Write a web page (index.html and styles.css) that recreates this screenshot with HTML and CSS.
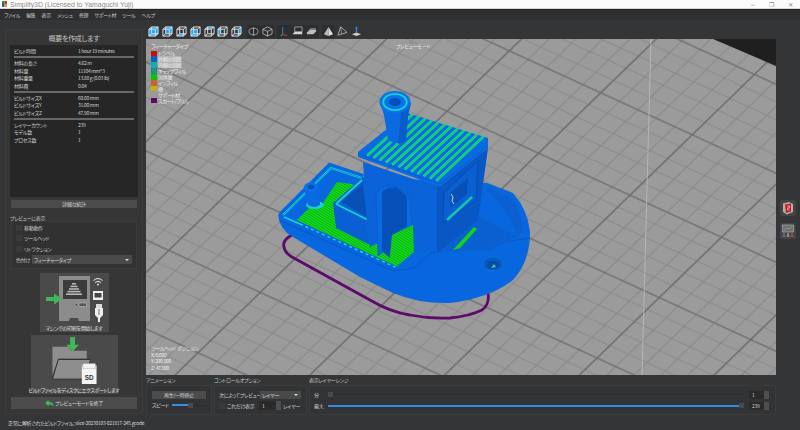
FILE: index.html
```html
<!DOCTYPE html>
<html lang="ja">
<head>
<meta charset="utf-8">
<title>Simplify3D</title>
<link rel="stylesheet" href="styles.css">
</head>
<body>
<svg class="defs" width="0" height="0" aria-hidden="true">
  <defs>
    <symbol id="wire" viewBox="0 0 12 12">
      <path d="M1 3.5H8V11H1ZM1 3.5L4 1H11V8.5L8 11M8 3.5L11 1M4 1V8.5H11M4 8.5L1 11" fill="none" stroke="#e8e8e8" stroke-width="1"/>
    </symbol>
    <pattern id="grid" width="5" height="5" patternUnits="userSpaceOnUse" patternTransform="matrix(18.3 8.4 12.45 -12.08 231 190)">
      <rect width="5" height="5" fill="#9b9b9b"/>
      <rect y="1" width="5" height=".05" fill="#868686"/>
      <rect y="2" width="5" height=".05" fill="#868686"/>
      <rect y="3" width="5" height=".05" fill="#868686"/>
      <rect y="4" width="5" height=".05" fill="#868686"/>
      <rect x="1" width=".05" height="5" fill="#868686"/>
      <rect x="2" width=".05" height="5" fill="#868686"/>
      <rect x="3" width=".05" height="5" fill="#868686"/>
      <rect x="4" width=".05" height="5" fill="#868686"/>
      <rect x="-.04" width=".08" height="5" fill="#6c6c6c"/>
      <rect y="-.04" width="5" height=".08" fill="#6c6c6c"/>
      <rect x="4.96" width=".08" height="5" fill="#6c6c6c"/>
      <rect y="4.96" width="5" height=".08" fill="#6c6c6c"/>
    </pattern>
    <pattern id="hatch" width="2.2" height="2.2" patternUnits="userSpaceOnUse" patternTransform="rotate(32)">
      <rect width="2.2" height="2.2" fill="#11dd0c"/>
      <rect width="2.2" height=".6" fill="#0b9a3a"/>
    </pattern>
    <pattern id="bowhatch" width="2" height="2" patternUnits="userSpaceOnUse" patternTransform="rotate(25)">
      <rect width="2" height="2" fill="#0a66dc"/>
      <rect width="2" height=".5" fill="#0a4fb0"/>
    </pattern>
  </defs>
</svg>

<header class="titlebar">
  <svg class="app-icon" viewBox="0 0 6 7"><rect width="3" height="3.5" fill="#1c8c3c"/><rect x="3" width="3" height="3.5" fill="#d03020"/><rect y="3.5" width="3" height="3.5" fill="#2050c0"/><rect x="3" y="3.5" width="3" height="3.5" fill="#d0a020"/></svg>
  <span class="app-name">Simplify3D (Licensed to Yamaguchi Yuji)</span>
  <div class="win-ctrls"><span>−</span><span>❐</span><span>✕</span></div>
</header>

<nav class="menubar">
  <span>ファイル</span><span>編集</span><span>表示</span><span>メッシュ</span><span>修理</span><span>サポート材</span><span>ツール</span><span>ヘルプ</span>
</nav>

<div class="workspace">
  <aside class="left">
    <section class="panel">
      <h1 class="panel-title">概要を作成します</h1>
      <div class="summary">
        <div class="row"><span>ビルド時間</span><span>1 hour 19 minutes</span></div>
        <hr class="sep">
        <div class="row"><span>材料の長さ</span><span>4.62 m</span></div>
        <div class="row"><span>材料量</span><span>11104 mm^3</span></div>
        <div class="row"><span>材料重量</span><span>13.88 g (0.03 lb)</span></div>
        <div class="row"><span>材料費</span><span>0.04</span></div>
        <hr class="sep">
        <div class="row"><span>ビルドサイズX</span><span>60.00 mm</span></div>
        <div class="row"><span>ビルドサイズY</span><span>31.00 mm</span></div>
        <div class="row"><span>ビルドサイズZ</span><span>47.90 mm</span></div>
        <hr class="sep">
        <div class="row"><span>レイヤーカウント</span><span>239</span></div>
        <div class="row"><span>モデル数</span><span>1</span></div>
        <div class="row"><span>プロセス数</span><span>1</span></div>
      </div>
      <button class="btn stats-btn">詳細な統計</button>
      <div class="group-label">プレビューに表示</div>
      <div class="show-box">
        <label class="check-row"><i class="check"></i>移動動作</label>
        <label class="check-row"><i class="check"></i>ツールヘッド</label>
        <label class="check-row"><i class="check"></i>リトラクション</label>
        <div class="color-row"><span>色付け</span><div class="select wide">フィーチャータイプ<i class="caret"></i></div></div>
      </div>
      <button class="big-btn machine">
        <svg class="big-icon" viewBox="40 274 69 50">
          <path d="M59 277H90V322H79L78 319H70L69 322H59Z" fill="#8c8c8c"/>
          <rect x="63" y="281" width="24" height="19" fill="#3c3c3c"/>
          <g fill="#b5b5b5"><rect x="72" y="284" width="4" height="1.6"/><rect x="70.5" y="286.6" width="7" height="1.6"/><rect x="69" y="289.2" width="10" height="1.6"/><rect x="67.5" y="291.8" width="13" height="1.6"/><rect x="66" y="294.4" width="16" height="1.6"/></g>
          <rect x="79" y="304" width="7.5" height="3.5" rx="1" fill="#555" stroke="#ccc" stroke-width=".5"/>
          <circle cx="76.5" cy="305.7" r=".8" fill="#333"/>
          <path d="M46 298H54V294.5L62 300L54 305.5V302H46Z" fill="#3fb75a"/>
          <g fill="none" stroke="#eee" stroke-width="1"><path d="M93.5 281.5Q98 277.5 102.5 281.5"/><path d="M95 283.5Q98 281 101 283.5"/></g>
          <circle cx="98" cy="285.5" r=".9" fill="#eee"/>
          <rect x="93" y="292" width="10" height="9" fill="#eee"/>
          <rect x="94.5" y="294" width="7" height="4.5" fill="#444"/>
          <rect x="96" y="305" width="6" height="4" fill="#ddd"/>
          <path d="M95 309H103V316L100 319V323H98V319L95 316Z" fill="#eee"/>
          <path d="M99 310V316" stroke="#555" stroke-width=".8"/>
        </svg>
        <span class="big-label">マシンでの印刷を開始します</span>
      </button>
      <button class="big-btn export">
        <svg class="big-icon" viewBox="31 336 87 51">
          <path d="M52 348H68L71 352H87V360H58L52 377Z" fill="#8e8e8e"/>
          <path d="M52 381L58 361H91L84 381Z" fill="#8e8e8e" stroke="#333" stroke-width="1"/>
          <path d="M70 338H75V346H79L72.5 353L66 346H70Z" fill="#3fb75a"/>
          <path d="M82 367H97V386H82Z" fill="#f4f4f4"/>
          <path d="M83 365H96V370H83Z" fill="#f4f4f4" stroke="#333" stroke-width=".4" stroke-dasharray="1 1"/>
          <text x="89.5" y="382" class="sd">SD</text>
        </svg>
        <span class="big-label">ビルドファイルをディスクにエクスポートします</span>
      </button>
      <button class="btn exit-btn">
        <svg class="exit-icon" viewBox="0 0 10 8"><path d="M0 3.5L4 0V2Q9 2 10 7.5Q8 5 4 5V7Z" fill="#3fb75a"/></svg>プレビューモードを終了
      </button>
    </section>
  </aside>

  <main class="main">
    <div class="toolbar">
      <div class="tool-set">
        <span class="tool"><svg viewBox="0 0 12 12"><path d="M1 3.5L4 1H11V8.5L8 11H1Z" fill="#19a4f5"/><use href="#wire"/></svg></span>
        <span class="tool"><svg viewBox="0 0 12 12"><path d="M4 1H11V8.5H4Z" fill="#19a4f5"/><use href="#wire"/></svg></span>
        <span class="tool"><svg viewBox="0 0 12 12"><path d="M4 8.5H11L8 11H1Z" fill="#19a4f5"/><use href="#wire"/></svg></span>
        <span class="tool"><svg viewBox="0 0 12 12"><path d="M1 3.5H8V11H1Z" fill="#19a4f5"/><use href="#wire"/></svg></span>
        <span class="tool"><svg viewBox="0 0 12 12"><path d="M1 3.5L4 1H11L8 3.5Z" fill="#19a4f5"/><use href="#wire"/></svg></span>
        <span class="tool"><svg viewBox="0 0 12 12"><path d="M1 3.5L4 1V8.5L1 11Z" fill="#19a4f5"/><use href="#wire"/></svg></span>
        <span class="tool"><svg viewBox="0 0 12 12"><path d="M8 3.5L11 1V8.5L8 11Z" fill="#19a4f5"/><use href="#wire"/></svg></span>
      </div>
      <div class="tool-set">
        <span class="tool dark"><svg viewBox="0 0 12 12"><ellipse cx="6" cy="6" rx="5" ry="3.6" fill="none" stroke="#bbb" stroke-width=".8"/><path d="M6 1.5V10.5" stroke="#bbb" stroke-width=".8"/></svg></span>
        <span class="tool dark"><svg viewBox="0 0 12 12"><path d="M6 1L11 3.5V8.5L6 11L1 8.5V3.5ZM1 3.5L6 6L11 3.5M6 6V11" fill="none" stroke="#ccc" stroke-width=".8"/></svg></span>
      </div>
      <div class="tool-set">
        <span class="tool dark"><svg viewBox="0 0 12 12"><path d="M4 1V9" stroke="#2f7be0" stroke-width="1.1"/><path d="M4 9L9 11" stroke="#d03030" stroke-width="1.1"/><path d="M4 9L2 11" stroke="#30b050" stroke-width="1.1"/></svg></span>
        <span class="tool dark"><svg viewBox="0 0 12 12"><path d="M3 1H11V7H3Z" fill="none" stroke="#ccc" stroke-width=".7"/><path d="M0.5 9L3.5 6H10.5L11.5 9Z" fill="#d8d8d8"/></svg></span>
        <span class="tool dark"><svg viewBox="0 0 12 12"><path d="M1 7L4 4H11V6L8 9H1Z" fill="#bdbdbd"/><path d="M3 4L5 2.5H10.5L11 4Z" fill="#8c8c8c"/></svg></span>
      </div>
      <div class="tool-set">
        <span class="tool dark"><svg viewBox="0 0 12 12"><path d="M6 1L1 9L6 11Z" fill="#bbb"/><path d="M6 1L11 9L6 11Z" fill="#ddd"/></svg></span>
        <span class="tool"><svg viewBox="0 0 12 12"><path d="M4 1L1 10L11 7Z" fill="none" stroke="#ccc" stroke-width=".8"/><path d="M4 1L5 8.5" stroke="#ccc" stroke-width=".6"/></svg></span>
        <span class="tool"><svg viewBox="0 0 12 12"><path d="M6 1V7" stroke="#2f8fe8" stroke-width="1.4"/><path d="M4.5 2.5L6 .5L7.5 2.5Z" fill="#2f8fe8"/><path d="M1 9L6 7L11 9L6 11Z" fill="#cfcfcf"/></svg></span>
      </div>
    </div>

    <div class="view-row">
      <div class="viewport">
        <svg class="scene" viewBox="146 39 630 336">
          <rect x="146" y="39" width="630" height="336" fill="url(#grid)"/>
          <path d="M651 39L642 375" stroke="#bdbdbd" stroke-width=".8" fill="none"/>
          <path d="M713 39H776V66Z" fill="#1f1f1f"/>

          <!-- skirt -->
          <path d="M292 235Q282 240 284 247Q285 253 292 257L370 300Q390 312 410 315Q430 319 450 318Q470 316 482 310Q490 304 488 293" fill="none" stroke="#5c0a6c" stroke-width="2.8"/>

          <!-- hull -->
          <path d="M278 215L330 165L363 177L487 183L513 193Q528 210 530 232Q530 262 513 280Q490 298 450 303Q420 304 393 293L360 277L293 237Q280 230 278 215Z" fill="#0867de"/>
          <path d="M279 220L393 271L413 268L431 253L530 238" fill="none" stroke="#0a57c4" stroke-width="1"/>
          <!-- bow interior -->
          <path d="M486 186L511 197Q522 212 524 230L517 236Q512 214 486 190Z" fill="url(#bowhatch)"/>
          <path d="M477 215L517 237L490 250L436 252Z" fill="url(#bowhatch)"/>
          <path d="M474 227L453 250L460 248L477 229Z" fill="#12d612"/>
          <!-- deck -->
          <path d="M297 220L310 207L323 203L337 182L352 184L370 190L370 247L413 225L414 252L396 267L383 262L333 237Z" fill="url(#hatch)"/>
          <!-- stern rim -->
          <path d="M281 215L330 166L363 177" fill="none" stroke="#0867de" stroke-width="6"/>
          <path d="M283 215L331 168L362 178" fill="none" stroke="#1ad2cc" stroke-width="2"/>
          <path d="M283 215L331 168L362 178" fill="none" stroke="#0a72dc" stroke-width=".7"/>
          <path d="M284 217L297 223L327 236L395 267" fill="none" stroke="#0867de" stroke-width="3"/>
          <path d="M284 217L300 224" fill="none" stroke="#1ad2cc" stroke-width="1.6"/>
          <path d="M300 224L395 267" fill="none" stroke="#1ad2cc" stroke-width="1.5" stroke-dasharray="3 3"/>
          <!-- box -->
          <path d="M333 203L362 178L372 183L372 246L336 228Z" fill="#0a60d2"/>
          <path d="M342 202L362 184L368 218Z" fill="#084fb6"/>
          <path d="M336 204L362 180M336 204L368 220" fill="none" stroke="#1ad2cc" stroke-width="1.8"/>
          <!-- small post -->
          <ellipse cx="315" cy="205" rx="9" ry="4" fill="#1ad2cc"/>
          <path d="M304 188L308 205Q314 209 320 205L319 188Z" fill="#0a6ae0"/>
          <ellipse cx="311" cy="187" rx="7" ry="4.5" fill="#0a72ea"/>
          <ellipse cx="311" cy="187" rx="3.6" ry="2.3" fill="#0752b8"/>

          <!-- cabin -->
          <path d="M363 162L437 187L441 253L368 243Z" fill="#0a63d8"/>
          <path d="M437 187L488 148L478 220L437 253Z" fill="#0857c4"/>
          <path d="M378 256L376 194Q381 185 392 186Q406 190 410 200L414 252L405 255L398 240Z" fill="#0a6ae0" stroke="#0858c6" stroke-width=".6"/>
          <path d="M382 192Q388 186 396 188Q405 192 407 198V226L392 235L390 258L382 251Z" fill="#0750ba"/>
          <path d="M392 235L413 225L414 252L397 263L390 258Z" fill="url(#hatch)"/>
          <!-- window -->
          <path d="M444 193L478 161L476 200L443 223Z" fill="#0a60d2" stroke="#0748a8" stroke-width=".8"/>
          <path d="M450 193L468 178L467 194L450 208Z" fill="#084fb6"/>
          <path d="M447 220L472 197" stroke="#0a6ae0" stroke-width="4"/>
          <path d="M447 220L472 197" stroke="#1ad2cc" stroke-width="2.2"/>
          <path d="M447 220L472 197" stroke="#12d612" stroke-width=".8"/>
          <path d="M451 194L453 197L452 201L454 204" fill="none" stroke="#b5d8ee" stroke-width="1"/>

          <!-- roof -->
          <path d="M358 152L407 113L488 138V148L440 187L358 157Z" fill="#0a6ae0"/>
          <path d="M358 154L440 184L488 146" fill="none" stroke="#0858c8" stroke-width=".7"/>
          <g fill="none" stroke-linecap="round">
            <path stroke="#1ad2cc" stroke-width="2.7" d="M368 155L412 115M374.3 157.3L418.5 117M380.5 159.5L425 119M386.8 161.8L431.4 121M393 164L437.8 123M399.4 166.4L444.3 125M405.6 168.6L450.7 127M411.9 170.9L457.2 129M418.2 173.2L463.6 131M424.4 175.4L470 133M430.7 177.7L476.5 135M437 180L483 137"/>
            <path stroke="#12d612" stroke-width="1.1" d="M368 155L412 115M374.3 157.3L418.5 117M380.5 159.5L425 119M386.8 161.8L431.4 121M393 164L437.8 123M399.4 166.4L444.3 125M405.6 168.6L450.7 127M411.9 170.9L457.2 129M418.2 173.2L463.6 131M424.4 175.4L470 133M430.7 177.7L476.5 135M437 180L483 137"/>
          </g>

          <!-- anchor port -->
          <ellipse cx="493" cy="264" rx="10" ry="7" fill="#0a58c0" stroke="#0b74e6" stroke-width="1"/>
          <ellipse cx="493" cy="265" rx="6" ry="4" fill="#0a4ba4"/>
          <path d="M491 268L494 264L496 267Z" fill="#2fd0b0"/>

          <!-- chimney -->
          <path d="M380 103L384 115L388 140Q397 146 406 140L408 115L411 103Z" fill="#0a6ae0"/>
          <path d="M398 144Q403 143 406 140L408 115L411 103H402Z" fill="#0a5ccc"/>
          <ellipse cx="395" cy="102" rx="15.5" ry="11" fill="#0a72ea"/>
          <ellipse cx="395" cy="102" rx="11.8" ry="8.2" fill="none" stroke="#1ad2cc" stroke-width="1.8"/>
          <ellipse cx="395" cy="102" rx="8" ry="5.4" fill="#0a72ea"/>
          <ellipse cx="395" cy="102" rx="6" ry="4" fill="#0750ba"/>
        </svg>

        <div class="legend">
          <div class="legend-title">フィーチャータイプ</div>
          <div class="legend-item"><i class="sw red"></i>トラベル</div>
          <div class="legend-item"><i class="sw blue"></i><span class="hl">外側の周囲</span></div>
          <div class="legend-item"><i class="sw teal"></i><span class="hl">内側の周囲</span></div>
          <div class="legend-item"><i class="sw gap"></i>ギャップフィル</div>
          <div class="legend-item"><i class="sw green"></i>固体層</div>
          <div class="legend-item"><i class="sw orange"></i>インフィル</div>
          <div class="legend-item"><i class="sw yellow"></i>橋</div>
          <div class="legend-item"><i class="sw gray"></i>サポート材</div>
          <div class="legend-item"><i class="sw purple"></i>スカート/ブリム</div>
        </div>
        <div class="mode-label">プレビューモード</div>
        <div class="toolhead">
          <div>ツールヘッド ポジション</div>
          <div>X: 0.000</div>
          <div>Y: 200.000</div>
          <div>Z: 47.900</div>
        </div>
      </div>
      <div class="rail">
        <span class="rail-btn"><svg viewBox="0 0 16 16"><path d="M3 3.5L9 2L13 4V12L7 14.5L3 12Z" fill="#b0b0b0"/><path d="M5 4.5L11 3.5V11.5L6 13Z" fill="#d01818"/><path d="M7 6H9.5V8H7.5V10H9.5" fill="none" stroke="#f0c0c0" stroke-width=".8"/></svg></span>
        <span class="rail-btn"><svg viewBox="0 0 16 16"><rect x="2.5" y="2" width="11" height="7" fill="#6e6e6e" stroke="#aaa" stroke-width=".7"/><path d="M4 7L7 5L9 6L12 4" fill="none" stroke="#8fbf8f" stroke-width=".6"/><path d="M4 10V14" stroke="#3c8ee0" stroke-width="1"/><path d="M8 10V14" stroke="#ccc" stroke-width="1"/><path d="M12 10V14" stroke="#d04040" stroke-width="1"/><path d="M2 13H14" stroke="#888" stroke-width=".5"/></svg></span>
      </div>
    </div>

    <div class="bottom">
      <div class="bgroup anim">
        <div class="group-label">アニメーション</div>
        <div class="bbox anim-box">
          <button class="btn play">再生/一時停止</button>
          <div class="speed"><span>スピード</span><div class="slider short"><i class="fill"></i><i class="knob"></i><i class="rest"></i></div></div>
        </div>
      </div>
      <div class="bgroup ctrl">
        <div class="group-label">コントロールオプション</div>
        <div class="bbox ctrl-box">
          <div class="ctrl-row"><span class="by">次によってプレビュー</span><div class="select narrow">レイヤー<i class="caret"></i></div></div>
          <div class="ctrl-row"><i class="check"></i><span class="only">これだけ表示</span><div class="spin mid"><span>1</span><i class="arrows"></i></div><span>レイヤー</span></div>
        </div>
      </div>
      <div class="bgroup range">
        <div class="group-label">表示レイヤーレンジ</div>
        <div class="bbox range-box">
          <div class="range-row"><span class="range-name">分</span><i class="knob"></i><i class="track"></i><div class="spin small"><span>1</span><i class="arrows"></i></div></div>
          <div class="range-row"><span class="range-name">最大</span><i class="track blue"></i><i class="knob"></i><div class="spin small"><span>239</span><i class="arrows"></i></div></div>
        </div>
      </div>
    </div>
  </main>
</div>

<footer class="status">正常に解析されたビルドファイル：slice-20230103-021817-245.gcode</footer>
</body>
</html>
```

FILE: styles.css
```css
* { box-sizing: border-box; }
html, body { margin: 0; height: 100%; }
body {
  width: 800px; height: 430px; overflow: hidden;
  display: flex; flex-direction: column;
  background: #343537; color: #cfcfcf;
  font: 5px/1.2 "Noto Sans CJK JP", "Noto Sans", sans-serif;
  font-feature-settings: "palt";
  letter-spacing: -.3px;
}
.defs { position: absolute; }
button { font: inherit; font-feature-settings: inherit; letter-spacing: inherit; color: inherit; border: 0; padding: 0; }
i { display: block; font-style: normal; }

.titlebar { height: 9px; flex: none; background: #fbfbfb; display: flex; align-items: center; padding-left: 2px; border-bottom: 1px solid #d8d8d8; }
.app-icon { width: 5px; height: 6px; margin-right: 3px; }
.app-name { color: #8d8d8d; font: 6.9px "Liberation Sans", sans-serif; letter-spacing: 0; }
.win-ctrls { margin-left: auto; display: flex; color: #888; font: 6px "DejaVu Sans", sans-serif; }
.win-ctrls span { width: 19px; text-align: center; }

.menubar { height: 11px; flex: none; display: flex; align-items: center; gap: 6px; padding-left: 4px; background: #2e2f31; color: #c8c8c8; border-top: 1px solid #222; }

.workspace { flex: 1; display: flex; min-height: 0; }
.left { width: 146px; flex: none; padding: 9px 3px 2px 5px; }
.panel { height: 385px; background: #363636; border: 1px solid #3c3c3c; padding: 0 4px; display: flex; flex-direction: column; }
.panel-title { margin: 0; height: 15px; font-size: 7px; font-weight: 400; text-align: center; line-height: 17px; color: #c4c4c4; }
.summary { height: 152px; background: #262626; padding: 2px 4px; flex: none; }
.row { display: flex; height: 7.5px; line-height: 7.5px; white-space: nowrap; }
.row span:first-child { width: 64px; }
.sep { height: 2px; margin: 1.5px 0 1px; border: 0; background: #686868; }

.btn { display: block; background: #4c4c4c; color: #d4d4d4; text-align: center; }
.stats-btn { height: 8px; margin: 3px 1px 0; line-height: 8px; flex: none; }
.group-label { height: 13px; line-height: 19px; color: #c4c4c4; white-space: nowrap; }
.show-box { height: 48px; margin: 0 1px; flex: none; border: 1px solid #3b3b3b; background: #313131; padding: 1px 4px; }
.check-row { display: flex; align-items: center; gap: 2px; height: 10.3px; }
.check { width: 6px; height: 6px; background: #3a3a3a; flex: none; }
.color-row { display: flex; align-items: center; gap: 2px; margin-top: 1.5px; white-space: nowrap; }
.select { background: #4a4a4a; display: flex; align-items: center; justify-content: space-between; padding: 0 3px 0 2px; color: #d8d8d8; white-space: nowrap; }
.select.wide { width: 101px; height: 9px; }
.select.narrow { width: 41px; height: 8px; }
.caret { width: 0; height: 0; border: 2px solid transparent; border-top: 2px solid #ddd; border-bottom: 0; }

.big-btn { display: flex; flex-direction: column; align-items: center; flex: none; background: #4a4a4a; color: #e2e2e2; align-self: center; }
.machine { width: 69px; height: 59px; margin-top: 4px; }
.export { width: 87px; height: 59px; margin-top: 3px; }
.big-icon { display: block; width: 100%; height: 50px; }
.big-label { white-space: nowrap; line-height: 9px; }
.sd { font: bold 6.5px "Liberation Sans", sans-serif; fill: #333; text-anchor: middle; letter-spacing: 0; }
.exit-btn { height: 12px; margin: 3px 1px 0; display: flex; align-items: center; justify-content: center; gap: 1px; flex: none; background: #4c4c4c; }
.exit-icon { width: 9px; height: 7px; }

.main { flex: 1; min-width: 0; display: flex; flex-direction: column; }
.toolbar { height: 19px; flex: none; display: flex; align-items: center; padding: 4px 0 0 1px; gap: 3px; }
.tool-set { display: flex; }
.tool { width: 13.8px; height: 13px; display: flex; align-items: center; justify-content: center; }
.tool.dark { background: #2d2e30; }
.tool svg { width: 11px; height: 11px; }

.view-row { display: flex; height: 336px; flex: none; }
.viewport { width: 630px; position: relative; background: #9b9b9b; overflow: hidden; }
.scene { display: block; width: 630px; height: 336px; }
.rail { flex: 1; display: flex; flex-direction: column; align-items: center; padding-top: 161px; gap: 7px; }
.rail-btn { width: 16px; height: 16px; background: #444; border-radius: 2px; display: block; }
.rail-btn svg { display: block; width: 16px; height: 16px; }

.legend { position: absolute; left: 5px; top: 4px; color: #ececec; }
.legend-title { height: 7.4px; line-height: 6px; }
.legend-item { display: flex; align-items: center; height: 5.9px; gap: 1px; white-space: nowrap; line-height: 5.9px; }
.sw { width: 6px; height: 5.6px; flex: none; }
.hl { background: #b4b4b4; }
.red { background: #c01212; } .blue { background: #0f5fbc; } .teal { background: #12aeb0; }
.gap { background: #0da85a; border: 1px dotted #45c; } .green { background: #0cc00c; }
.orange { background: #c2652e; } .yellow { background: #c2b010; } .gray { background: #9a9a9a; } .purple { background: #5a0a62; }
.mode-label { position: absolute; left: 250px; top: 4px; color: #e8e8e8; }
.toolhead { position: absolute; left: 5px; top: 306px; color: #ececec; line-height: 6.6px; }

.bottom { flex: 1; display: flex; gap: 2px; }
.bgroup .group-label { height: 10px; line-height: 9px; }
.bbox { height: 30px; background: #323335; border: 1px solid #393a3c; }
.anim { width: 66px; flex: none; }
.anim-box { padding: 5px 5px 0; }
.play { height: 8px; line-height: 8px; width: 100%; }
.speed { display: flex; align-items: center; gap: 3px; margin-top: 3px; white-space: nowrap; }
.slider { flex: 1; display: flex; align-items: center; }
.fill { width: 16px; height: 2px; background: #3a8de0; }
.rest { flex: 1; height: 1px; background: #2a2a2a; }
.knob { width: 5px; height: 5px; background: #4a4a4a; flex: none; }
.ctrl { width: 93px; flex: none; }
.ctrl-box { padding: 3px 4px 0; }
.ctrl-row { display: flex; align-items: center; height: 11px; gap: 2px; white-space: nowrap; }
.ctrl-row .by { width: 39px; }
.ctrl-row .only { width: 30px; }
.spin { background: #2a2a2a; display: flex; align-items: center; justify-content: space-between; color: #ccc; padding-left: 3px; }
.spin.mid { width: 22px; height: 9px; }
.spin.small { width: 20px; height: 8px; flex: none; margin-left: 5px; }
.arrows { width: 5px; height: 100%; background: #4e4e4e; }
.range { flex: 1; margin-right: 24px; }
.range-box { padding: 3px 6px 0 4px; }
.range-row { display: flex; align-items: center; height: 11px; }
.range-name { width: 14px; flex: none; }
.track { flex: 1; height: 1px; background: #2d2d2d; }
.track.blue { height: 2px; background: #2f8ae6; }

.status { height: 14px; flex: none; padding-left: 8px; line-height: 13px; color: #d4d4d4; background: #343537; }
```
